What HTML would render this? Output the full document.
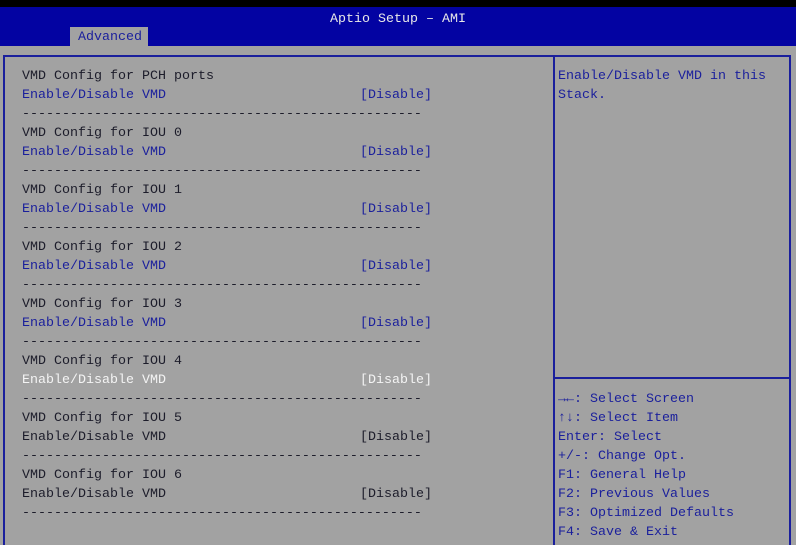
<!DOCTYPE html>
<html><head><meta charset="utf-8"><style>
*{margin:0;padding:0;box-sizing:border-box}
body{width:796px;height:537px;overflow:hidden;background:#a2a2a2;font-family:"Liberation Mono","DejaVu Sans Mono",monospace;font-size:13.33px;color:#1c1c2a;position:relative}
.t{position:absolute;white-space:pre;line-height:19px}
.b{color:#1a1f9c}
.w{color:#f4f4f4}
.c{position:absolute;top:0;left:0;width:796px;height:537px;transform:translateY(2px)}
</style></head><body>
<div style="position:absolute;left:0;top:0;width:796px;height:7px;background:#000"></div>
<div style="position:absolute;left:0;top:7px;width:796px;height:39px;background:#0303a2"></div>
<div class="t" style="left:0;width:796px;top:10px;text-align:center;color:#e8e8e8">Aptio Setup – AMI</div>
<div style="position:absolute;left:70px;top:27px;width:78px;height:19px;background:#a2a2a2"></div>
<div class="t b" style="left:78px;top:28px">Advanced</div>
<div style="position:absolute;left:3px;top:55px;width:788px;height:490px;border:2px solid #1a1f9c;border-bottom:none"></div>
<div style="position:absolute;left:553px;top:55px;width:2px;height:490px;background:#1a1f9c"></div>
<div style="position:absolute;left:555px;top:377px;width:235px;height:2px;background:#1a1f9c"></div>
<div class="c">
<div class="t b" style="left:558px;top:65px">Enable/Disable VMD in this
Stack.</div>
<div class="t b" style="left:558px;top:388px"><b>→←</b>: Select Screen
<b>↑↓</b>: Select Item
Enter: Select
+/-: Change Opt.
F1: General Help
F2: Previous Values
F3: Optimized Defaults
F4: Save &amp; Exit</div>
<div class="t" style="left:22px;top:65px">VMD Config for PCH ports</div>
<div class="t b" style="left:22px;top:84px">Enable/Disable VMD</div><div class="t b" style="left:360px;top:84px">[Disable]</div>
<div class="t" style="left:22px;top:103px">--------------------------------------------------</div>
<div class="t" style="left:22px;top:122px">VMD Config for IOU 0</div>
<div class="t b" style="left:22px;top:141px">Enable/Disable VMD</div><div class="t b" style="left:360px;top:141px">[Disable]</div>
<div class="t" style="left:22px;top:160px">--------------------------------------------------</div>
<div class="t" style="left:22px;top:179px">VMD Config for IOU 1</div>
<div class="t b" style="left:22px;top:198px">Enable/Disable VMD</div><div class="t b" style="left:360px;top:198px">[Disable]</div>
<div class="t" style="left:22px;top:217px">--------------------------------------------------</div>
<div class="t" style="left:22px;top:236px">VMD Config for IOU 2</div>
<div class="t b" style="left:22px;top:255px">Enable/Disable VMD</div><div class="t b" style="left:360px;top:255px">[Disable]</div>
<div class="t" style="left:22px;top:274px">--------------------------------------------------</div>
<div class="t" style="left:22px;top:293px">VMD Config for IOU 3</div>
<div class="t b" style="left:22px;top:312px">Enable/Disable VMD</div><div class="t b" style="left:360px;top:312px">[Disable]</div>
<div class="t" style="left:22px;top:331px">--------------------------------------------------</div>
<div class="t" style="left:22px;top:350px">VMD Config for IOU 4</div>
<div class="t w" style="left:22px;top:369px">Enable/Disable VMD</div><div class="t w" style="left:360px;top:369px">[Disable]</div>
<div class="t" style="left:22px;top:388px">--------------------------------------------------</div>
<div class="t" style="left:22px;top:407px">VMD Config for IOU 5</div>
<div class="t" style="left:22px;top:426px">Enable/Disable VMD</div><div class="t" style="left:360px;top:426px">[Disable]</div>
<div class="t" style="left:22px;top:445px">--------------------------------------------------</div>
<div class="t" style="left:22px;top:464px">VMD Config for IOU 6</div>
<div class="t" style="left:22px;top:483px">Enable/Disable VMD</div><div class="t" style="left:360px;top:483px">[Disable]</div>
<div class="t" style="left:22px;top:502px">--------------------------------------------------</div>
</div>
</body></html>
